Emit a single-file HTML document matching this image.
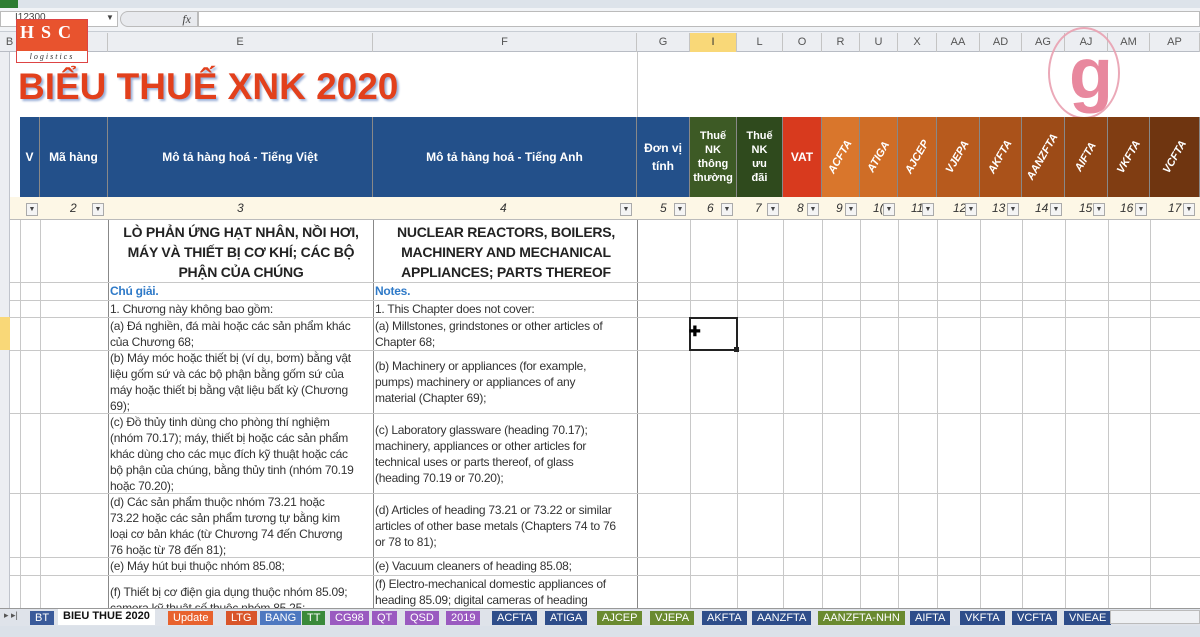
<!DOCTYPE html>
<html><head><meta charset="utf-8"><style>
*{margin:0;padding:0;box-sizing:border-box}
body{width:1200px;height:637px;overflow:hidden;background:#fff;font-family:"Liberation Sans",sans-serif;position:relative}
.a{position:absolute}
.vl{position:absolute;width:1px;background:#c8c8c8}
.hl{position:absolute;height:1px;background:#c8c8c8}
.ch{position:absolute;top:33px;height:19px;font-size:11px;color:#555;text-align:center;line-height:19px;border-right:1px solid #c4c4c4}
.hd{position:absolute;top:117px;height:80px;color:#fff;font-weight:bold;display:flex;align-items:center;justify-content:center;text-align:center;border-right:1px solid #888}
.rot{transform:rotate(-60deg);font-size:11px;font-style:italic;white-space:nowrap}
.ft{position:absolute;top:199px;height:19px;font-size:12px;font-style:italic;color:#333;line-height:19px}
.fb{position:absolute;top:203px;width:12px;height:13px;border:1px solid #aaa;background:#f4f4f4;font-size:7px;color:#444;text-align:center;line-height:11px}
.t{position:absolute;font-size:12px;color:#333;line-height:16px;letter-spacing:-0.25px}
.tab{position:absolute;top:611px;height:14px;font-size:11px;color:#fff;line-height:14px;padding:0 5px}
</style></head><body>
<!-- top toolbar -->
<div class="a" style="left:0;top:0;width:1200px;height:8px;background:#dde3ea"></div>
<div class="a" style="left:0;top:0;width:18px;height:8px;background:#2e7d32"></div>
<div class="a" style="left:0;top:8px;width:1200px;height:24px;background:#f1f3f6;border-bottom:1px solid #c8cdd4"></div>
<div class="a" style="left:0;top:11px;width:118px;height:16px;background:#fff;border:1px solid #bbb;font-size:10px;color:#444;padding-left:14px">I12300</div>
<div class="a" style="left:106px;top:13px;font-size:8px;color:#444">▼</div>
<div class="a" style="left:120px;top:11px;width:78px;height:16px;background:#e8eaee;border:1px solid #bbb;border-radius:8px 0 0 8px;font-style:italic;font-size:12px;color:#444;text-align:right;padding-right:6px;font-family:'Liberation Serif',serif">fx</div>
<div class="a" style="left:198px;top:11px;width:1002px;height:16px;background:#fff;border:1px solid #bbb"></div>
<!-- column header row -->
<div class="a" style="left:0;top:32px;width:1200px;height:20px;background:#eceef2;border-bottom:1px solid #b8bcc4"></div>
<div class="ch" style="left:0;width:20px">B</div>
<div class="ch" style="left:20px;width:88px"></div>
<div class="ch" style="left:108px;width:265px">E</div>
<div class="ch" style="left:373px;width:264px">F</div>
<div class="ch" style="left:637px;width:53px">G</div>
<div class="ch" style="left:690px;width:47px;background:#f9d878;color:#333">I</div>
<div class="ch" style="left:737px;width:46px">L</div>
<div class="ch" style="left:783px;width:39px">O</div>
<div class="ch" style="left:822px;width:38px">R</div>
<div class="ch" style="left:860px;width:38px">U</div>
<div class="ch" style="left:898px;width:39px">X</div>
<div class="ch" style="left:937px;width:43px">AA</div>
<div class="ch" style="left:980px;width:42px">AD</div>
<div class="ch" style="left:1022px;width:43px">AG</div>
<div class="ch" style="left:1065px;width:43px">AJ</div>
<div class="ch" style="left:1108px;width:42px">AM</div>
<div class="ch" style="left:1150px;width:50px">AP</div>
<!-- row header col -->
<div class="a" style="left:0;top:52px;width:10px;height:556px;background:#eceef2;border-right:1px solid #c0c4cc"></div>
<div class="a" style="left:0;top:317px;width:10px;height:33px;background:#f9d878"></div>
<!-- logo -->
<div class="a" style="left:16px;top:19px;width:72px;height:44px;background:#e8532e;border:1px solid #d44"></div>
<div class="a" style="left:20px;top:22px;font-family:'Liberation Serif',serif;font-size:18px;color:#fff;letter-spacing:7px;font-weight:bold">HSC</div>
<div class="a" style="left:17px;top:51px;width:70px;height:11px;background:#fff;font-family:'Liberation Serif',serif;font-style:italic;font-size:8px;letter-spacing:2px;text-align:center;line-height:11px;color:#333">logistics</div>
<!-- title -->
<div class="a" style="left:18px;top:66px;font-size:37px;font-weight:bold;color:#e2401c;text-shadow:2px 2px 2px #9ab0d8;letter-spacing:0px">BIỂU THUẾ XNK 2020</div>
<div class="vl" style="left:637px;top:52px;height:65px"></div>
<!-- watermark -->
<div class="a" style="left:1048px;top:27px;width:72px;height:92px;border:2px solid #e9a0b0;border-radius:50%;opacity:.9"></div>
<div class="a" style="left:1063px;top:38px;width:56px;height:72px;font-size:72px;font-weight:bold;color:#e8889e;line-height:72px;text-align:center">g</div>
<!-- headers -->
<div class="hd" style="left:20px;width:20px;background:#23508a;font-size:12px">V</div>
<div class="hd" style="left:40px;width:68px;background:#23508a;font-size:12px">Mã hàng</div>
<div class="hd" style="left:108px;width:265px;background:#23508a;font-size:12px">Mô tả hàng hoá - Tiếng Việt</div>
<div class="hd" style="left:373px;width:264px;background:#23508a;font-size:12px">Mô tả hàng hoá - Tiếng Anh</div>
<div class="hd" style="left:637px;width:53px;background:#23508a;font-size:12px;line-height:18px">Đơn vị<br>tính</div>
<div class="hd" style="left:690px;width:47px;background:#3d5a25;font-size:11px;line-height:14px">Thuế<br>NK<br>thông<br>thường</div>
<div class="hd" style="left:737px;width:46px;background:#2f4a1d;font-size:11px;line-height:14px">Thuế<br>NK<br>ưu<br>đãi</div>
<div class="hd" style="left:783px;width:39px;background:#d83a1e;font-size:12px">VAT</div>
<div class="hd" style="left:822px;width:38px;background:#d9762c"><span class="rot">ACFTA</span></div>
<div class="hd" style="left:860px;width:38px;background:#cf6d26"><span class="rot">ATIGA</span></div>
<div class="hd" style="left:898px;width:39px;background:#c46321"><span class="rot">AJCEP</span></div>
<div class="hd" style="left:937px;width:43px;background:#b75a1d"><span class="rot">VJEPA</span></div>
<div class="hd" style="left:980px;width:42px;background:#aa521a"><span class="rot">AKFTA</span></div>
<div class="hd" style="left:1022px;width:43px;background:#9d4b17"><span class="rot">AANZFTA</span></div>
<div class="hd" style="left:1065px;width:43px;background:#8f4414"><span class="rot">AIFTA</span></div>
<div class="hd" style="left:1108px;width:42px;background:#803d12"><span class="rot">VKFTA</span></div>
<div class="hd" style="left:1150px;width:50px;background:#6f3510"><span class="rot">VCFTA</span></div>
<!-- filter row -->
<div class="a" style="left:10px;top:197px;width:1190px;height:23px;background:#fdf7e6;border-bottom:1px solid #bbb"></div>
<div class="fb" style="left:26px">▼</div>
<div class="ft" style="left:70px">2</div><div class="fb" style="left:92px">▼</div>
<div class="ft" style="left:237px">3</div><div class="fb" style="left:620px">▼</div>
<div class="ft" style="left:500px">4</div>
<div class="ft" style="left:660px">5</div><div class="fb" style="left:674px">▼</div>
<div class="ft" style="left:707px">6</div><div class="fb" style="left:721px">▼</div>
<div class="ft" style="left:755px">7</div><div class="fb" style="left:767px">▼</div>
<div class="ft" style="left:797px">8</div><div class="fb" style="left:807px">▼</div>
<div class="ft" style="left:836px">9</div><div class="fb" style="left:845px">▼</div>
<div class="ft" style="left:873px">1(</div><div class="fb" style="left:883px">▼</div>
<div class="ft" style="left:911px">11</div><div class="fb" style="left:922px">▼</div>
<div class="ft" style="left:953px">12</div><div class="fb" style="left:965px">▼</div>
<div class="ft" style="left:992px">13</div><div class="fb" style="left:1007px">▼</div>
<div class="ft" style="left:1035px">14</div><div class="fb" style="left:1050px">▼</div>
<div class="ft" style="left:1079px">15</div><div class="fb" style="left:1093px">▼</div>
<div class="ft" style="left:1120px">16</div><div class="fb" style="left:1135px">▼</div>
<div class="ft" style="left:1168px">17</div><div class="fb" style="left:1183px">▼</div>
<!-- grid lines body -->
<div class="vl" style="left:20px;top:220px;height:388px"></div>
<div class="vl" style="left:40px;top:220px;height:388px"></div>
<div class="vl" style="left:108px;top:220px;height:388px;background:#888"></div>
<div class="vl" style="left:373px;top:220px;height:388px;background:#888"></div>
<div class="vl" style="left:637px;top:220px;height:388px;background:#888"></div>
<div class="vl" style="left:690px;top:220px;height:388px"></div>
<div class="vl" style="left:737px;top:220px;height:388px"></div>
<div class="vl" style="left:783px;top:220px;height:388px"></div>
<div class="vl" style="left:822px;top:220px;height:388px"></div>
<div class="vl" style="left:860px;top:220px;height:388px"></div>
<div class="vl" style="left:898px;top:220px;height:388px"></div>
<div class="vl" style="left:937px;top:220px;height:388px"></div>
<div class="vl" style="left:980px;top:220px;height:388px"></div>
<div class="vl" style="left:1022px;top:220px;height:388px"></div>
<div class="vl" style="left:1065px;top:220px;height:388px"></div>
<div class="vl" style="left:1108px;top:220px;height:388px"></div>
<div class="vl" style="left:1150px;top:220px;height:388px"></div>
<div class="hl" style="left:10px;top:282px;width:1190px"></div>
<div class="hl" style="left:10px;top:300px;width:1190px"></div>
<div class="hl" style="left:10px;top:317px;width:1190px"></div>
<div class="hl" style="left:10px;top:350px;width:1190px"></div>
<div class="hl" style="left:10px;top:413px;width:1190px"></div>
<div class="hl" style="left:10px;top:493px;width:1190px"></div>
<div class="hl" style="left:10px;top:557px;width:1190px"></div>
<div class="hl" style="left:10px;top:575px;width:1190px"></div>
<!-- selected cell -->
<div class="a" style="left:689px;top:317px;width:49px;height:34px;border:2px solid #222"></div>
<div class="a" style="left:734px;top:347px;width:5px;height:5px;background:#222"></div>
<div class="a" style="left:689px;top:323px;font-size:14px;font-weight:bold">✚</div>
<!-- content -->
<div class="t" style="left:110px;top:222px;width:262px;text-align:center;font-weight:bold;font-size:14px;line-height:20px;color:#222">LÒ PHẢN ỨNG HẠT NHÂN, NỒI HƠI, MÁY VÀ THIẾT BỊ CƠ KHÍ; CÁC BỘ PHẬN CỦA CHÚNG</div>
<div class="t" style="left:375px;top:222px;width:262px;text-align:center;font-weight:bold;font-size:14px;line-height:20px;color:#222">NUCLEAR REACTORS, BOILERS, MACHINERY AND MECHANICAL APPLIANCES; PARTS THEREOF</div>
<div class="t" style="left:110px;top:283px;color:#2f7ac8;font-weight:bold">Chú giải.</div>
<div class="t" style="left:375px;top:283px;color:#2f7ac8;font-weight:bold">Notes.</div>
<div class="t" style="left:110px;top:301px">1. Chương này không bao gồm:</div>
<div class="t" style="left:375px;top:301px">1. This Chapter does not cover:</div>
<div class="t" style="left:110px;top:318px;width:265px">(a) Đá nghiền, đá mài hoặc các sản phẩm khác<br>của Chương 68;</div>
<div class="t" style="left:375px;top:318px">(a) Millstones, grindstones or other articles of<br>Chapter 68;</div>
<div class="t" style="left:110px;top:350px">(b) Máy móc hoặc thiết bị (ví dụ, bơm) bằng vật<br>liệu gốm sứ và các bộ phận bằng gốm sứ của<br>máy hoặc thiết bị bằng vật liệu bất kỳ (Chương<br>69);</div>
<div class="t" style="left:375px;top:358px">(b) Machinery or appliances (for example,<br>pumps) machinery or appliances of any<br>material (Chapter 69);</div>
<div class="t" style="left:110px;top:414px">(c) Đồ thủy tinh dùng cho phòng thí nghiệm<br>(nhóm 70.17); máy, thiết bị hoặc các sản phẩm<br>khác dùng cho các mục đích kỹ thuật hoặc các<br>bộ phận của chúng, bằng thủy tinh (nhóm 70.19<br>hoặc 70.20);</div>
<div class="t" style="left:375px;top:422px">(c) Laboratory glassware (heading 70.17);<br>machinery, appliances or other articles for<br>technical uses or parts thereof, of glass<br>(heading 70.19 or 70.20);</div>
<div class="t" style="left:110px;top:494px">(d) Các sản phẩm thuộc nhóm 73.21 hoặc<br>73.22 hoặc các sản phẩm tương tự bằng kim<br>loại cơ bản khác (từ Chương 74 đến Chương<br>76 hoặc từ 78 đến 81);</div>
<div class="t" style="left:375px;top:502px">(d) Articles of heading 73.21 or 73.22 or similar<br>articles of other base metals (Chapters 74 to 76<br>or 78 to 81);</div>
<div class="t" style="left:110px;top:558px">(e) Máy hút bụi thuộc nhóm 85.08;</div>
<div class="t" style="left:375px;top:558px">(e) Vacuum cleaners of heading 85.08;</div>
<div class="t" style="left:110px;top:584px">(f) Thiết bị cơ điện gia dụng thuộc nhóm 85.09;<br>camera kỹ thuật số thuộc nhóm 85.25;</div>
<div class="t" style="left:375px;top:576px">(f) Electro-mechanical domestic appliances of<br>heading 85.09; digital cameras of heading</div>
<!-- tabs -->
<div class="a" style="left:0;top:608px;width:1200px;height:18px;background:#dfe3ea;border-top:1px solid #999"></div>
<div class="a" style="left:4px;top:610px;font-size:9px;color:#555">▸ ▸|</div>
<div class="tab" style="left:30px;background:#3a5a9a">BT</div>
<div class="tab" style="left:58px;background:#fff;color:#111;font-weight:bold;top:609px;height:16px">BIEU THUE 2020</div>
<div class="tab" style="left:168px;background:#e8622e">Update</div>
<div class="tab" style="left:226px;background:#d9552a">LTG</div>
<div class="tab" style="left:260px;background:#4e78c0">BANG</div>
<div class="tab" style="left:302px;background:#3a8a3a">TT</div>
<div class="tab" style="left:330px;background:#9a5ac0">CG98</div>
<div class="tab" style="left:372px;background:#9a5ac0">QT</div>
<div class="tab" style="left:405px;background:#9a5ac0">QSD</div>
<div class="tab" style="left:446px;background:#9a5ac0">2019</div>
<div class="tab" style="left:492px;background:#2e4d8a">ACFTA</div>
<div class="tab" style="left:545px;background:#2e4d8a">ATIGA</div>
<div class="tab" style="left:597px;background:#6a8a30">AJCEP</div>
<div class="tab" style="left:650px;background:#6a8a30">VJEPA</div>
<div class="tab" style="left:702px;background:#2e4d8a">AKFTA</div>
<div class="tab" style="left:752px;background:#2e4d8a">AANZFTA</div>
<div class="tab" style="left:818px;background:#6a8a30">AANZFTA-NHN</div>
<div class="tab" style="left:910px;background:#2e4d8a">AIFTA</div>
<div class="tab" style="left:960px;background:#2e4d8a">VKFTA</div>
<div class="tab" style="left:1012px;background:#2e4d8a">VCFTA</div>
<div class="tab" style="left:1064px;background:#2e4d8a">VNEAE</div>
<div class="a" style="left:1110px;top:610px;width:90px;height:14px;background:#eef0f3;border:1px solid #bbb"></div>
<!-- status -->
<div class="a" style="left:0;top:626px;width:1200px;height:11px;background:#dbe1e9"></div>
</body></html>
